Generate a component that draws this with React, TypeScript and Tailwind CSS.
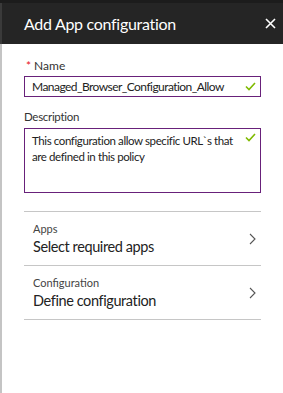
const font = { fontFamily: 'Lato, "Open Sans", sans-serif' };

function Check() {
  return (
    <svg width="11" height="9" viewBox="0 0 11 9" className="shrink-0">
      <path d="M1 4.5 L4 7.5 L10 1" fill="none" stroke="#7fba00" strokeWidth="1.6" />
    </svg>
  );
}

function Chevron() {
  return (
    <svg width="7" height="12" viewBox="0 0 7 12" className="shrink-0">
      <path d="M1 1 L6 6 L1 11" fill="none" stroke="#555" strokeWidth="1.1" />
    </svg>
  );
}

function NavRow({ label, value }: { label: string; value: string }) {
  return (
    <div className="flex items-center justify-between border-b border-[#c6c6c6] pl-[9px] pr-[5px] h-[54px]">
      <div className="flex flex-col pt-[1px]">
        <span className="text-[11px] leading-[14px] text-[#444]">{label}</span>
        <span className="text-[14.5px] leading-[21px] text-[#222] tracking-[-0.4px]">{value}</span>
      </div>
      <Chevron />
    </div>
  );
}

export default function App() {
  return (
    <div className="w-[283px] h-[393px] bg-[#1c1c1c] pt-[3px] flex flex-col" style={font}>
      <div className="flex flex-col flex-1 border-l-[2px] border-[#c4c4c4]">
        <div className="h-[41px] bg-[#252525] flex items-center justify-between pl-[22px] pr-[7px] border-l-[2px] border-[#3a3a3a] -ml-[2px]">
          <span className="text-white text-[16px] tracking-[-0.3px]">Add App configuration</span>
          <svg width="11" height="11" viewBox="0 0 11 11">
            <path d="M1 1 L10 10 M10 1 L1 10" stroke="#fff" strokeWidth="1.6" />
          </svg>
        </div>
        <div className="flex-1 bg-white px-[22px]">
          <div className="mt-[14px] flex items-center gap-[3px] text-[12px] leading-[16px] text-[#333]">
            <span className="text-[#e81123] pl-[2px]">*</span>
            <span>Name</span>
          </div>
          <div className="mt-[2px] h-[21px] border border-[#68217a] flex items-center justify-between pl-[7px] pr-[4px]">
            <span className="text-[12px] text-[#222] tracking-[-0.55px]">Managed_Browser_Configuration_Allow</span>
            <Check />
          </div>
          <div className="mt-[12px] text-[11.5px] leading-[16px] text-[#333] tracking-[-0.3px]">Description</div>
          <div className="mt-[3px] h-[65px] border border-[#68217a] flex items-start justify-between pl-[7px] pr-[4px] pt-[4px]">
            <span className="text-[11.5px] leading-[16px] text-[#222] tracking-[-0.4px] w-[212px]">
              This configuration allow specific URL`s that are defined in this policy
            </span>
            <Check />
          </div>
          <div className="mt-[18px] border-t border-[#c6c6c6]">
            <NavRow label="Apps" value="Select required apps" />
            <NavRow label="Configuration" value="Define configuration" />
          </div>
        </div>
      </div>
    </div>
  );
}
